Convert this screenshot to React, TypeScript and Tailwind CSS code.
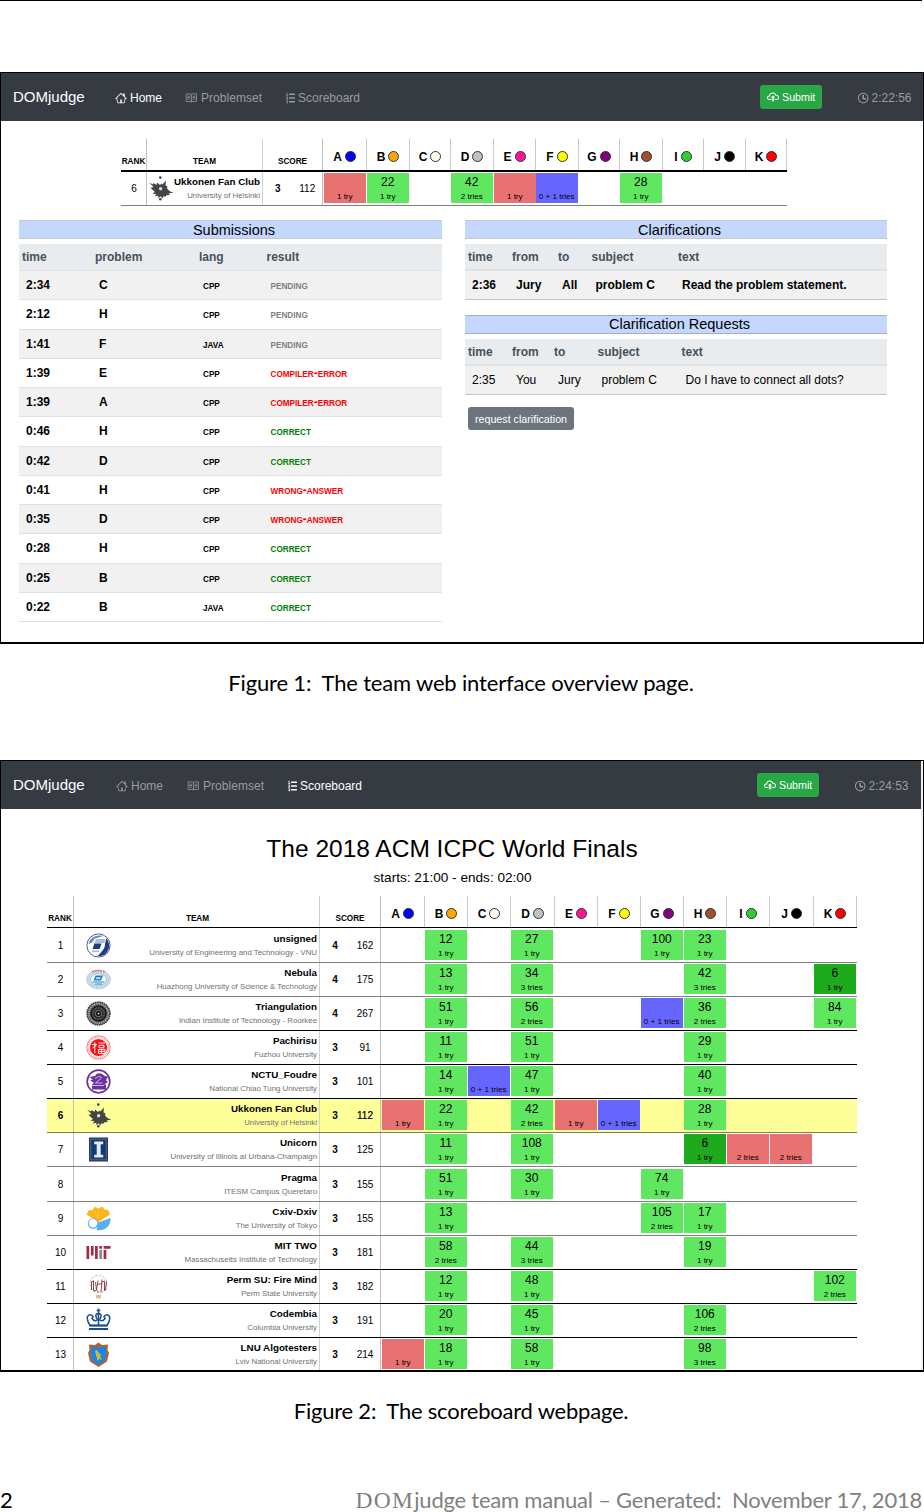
import clsx from 'clsx';
import type { ReactNode } from 'react';

const problems = [
  { label: 'A', color: 'bg-[#0000ff]' },
  { label: 'B', color: 'bg-[#ffa500]' },
  { label: 'C', color: 'bg-[#fffff0]' },
  { label: 'D', color: 'bg-[#c0c0c0]' },
  { label: 'E', color: 'bg-[#ff1493]' },
  { label: 'F', color: 'bg-[#ffff00]' },
  { label: 'G', color: 'bg-[#800080]' },
  { label: 'H', color: 'bg-[#a0522d]' },
  { label: 'I', color: 'bg-[#32cd32]' },
  { label: 'J', color: 'bg-black' },
  { label: 'K', color: 'bg-[#ff0000]' },
];

type Kind = 'solved' | 'first' | 'wrong' | 'pending';
type Result = [problem: string, kind: Kind, time: string, tries: string];

interface Team {
  rank: number;
  name: string;
  school: string;
  solved: number;
  total: number;
  logo: string;
  line: string;
  results: Result[];
}

const cellColors: Record<Kind, string> = {
  solved: 'bg-[#60e760]',
  first: 'bg-[#1daa1d]',
  wrong: 'bg-[#e87272]',
  pending: 'bg-[#6666ff]',
};

const gray = 'h-[34px] border-[#808080]';
const grayTall = 'h-[35px] border-[#808080]';
const black = 'h-[34px] border-black';

const teams: Team[] = [
  { rank: 1, name: 'unsigned', school: 'University of Engineering and Technology - VNU', solved: 4, total: 162, logo: 'vnu', line: grayTall, results: [['B', 'solved', '12', '1 try'], ['D', 'solved', '27', '1 try'], ['G', 'solved', '100', '1 try'], ['H', 'solved', '23', '1 try']] },
  { rank: 2, name: 'Nebula', school: 'Huazhong University of Science & Technology', solved: 4, total: 175, logo: 'hust', line: gray, results: [['B', 'solved', '13', '1 try'], ['D', 'solved', '34', '3 tries'], ['H', 'solved', '42', '3 tries'], ['K', 'first', '6', '1 try']] },
  { rank: 3, name: 'Triangulation', school: 'Indian Institute of Technology - Roorkee', solved: 4, total: 267, logo: 'iit', line: black, results: [['B', 'solved', '51', '1 try'], ['D', 'solved', '56', '2 tries'], ['G', 'pending', '', '0 + 1 tries'], ['H', 'solved', '36', '2 tries'], ['K', 'solved', '84', '1 try']] },
  { rank: 4, name: 'Pachirisu', school: 'Fuzhou University', solved: 3, total: 91, logo: 'fuzhou', line: black, results: [['B', 'solved', '11', '1 try'], ['D', 'solved', '51', '1 try'], ['H', 'solved', '29', '1 try']] },
  { rank: 5, name: 'NCTU_Foudre', school: 'National Chiao Tung University', solved: 3, total: 101, logo: 'nctu', line: black, results: [['B', 'solved', '14', '1 try'], ['C', 'pending', '', '0 + 1 tries'], ['D', 'solved', '47', '1 try'], ['H', 'solved', '40', '1 try']] },
  { rank: 6, name: 'Ukkonen Fan Club', school: 'University of Helsinki', solved: 3, total: 112, logo: 'helsinki', line: 'h-[34px] border-[#80804d]', results: [['A', 'wrong', '', '1 try'], ['B', 'solved', '22', '1 try'], ['D', 'solved', '42', '2 tries'], ['E', 'wrong', '', '1 try'], ['F', 'pending', '', '0 + 1 tries'], ['H', 'solved', '28', '1 try']] },
  { rank: 7, name: 'Unicorn', school: 'University of Illinois at Urbana-Champaign', solved: 3, total: 125, logo: 'illinois', line: gray, results: [['B', 'solved', '11', '1 try'], ['D', 'solved', '108', '1 try'], ['H', 'first', '6', '1 try'], ['I', 'wrong', '', '2 tries'], ['J', 'wrong', '', '2 tries']] },
  { rank: 8, name: 'Pragma', school: 'ITESM Campus Queretaro', solved: 3, total: 155, logo: '', line: grayTall, results: [['B', 'solved', '51', '1 try'], ['D', 'solved', '30', '1 try'], ['G', 'solved', '74', '1 try']] },
  { rank: 9, name: 'Cxiv-Dxiv', school: 'The University of Tokyo', solved: 3, total: 155, logo: 'tokyo', line: gray, results: [['B', 'solved', '13', '1 try'], ['G', 'solved', '105', '2 tries'], ['H', 'solved', '17', '1 try']] },
  { rank: 10, name: 'MIT TWO', school: 'Massachusetts Institute of Technology', solved: 3, total: 181, logo: 'mit', line: black, results: [['B', 'solved', '58', '2 tries'], ['D', 'solved', '44', '3 tries'], ['H', 'solved', '19', '1 try']] },
  { rank: 11, name: 'Perm SU: Fire Mind', school: 'Perm State University', solved: 3, total: 182, logo: 'perm', line: black, results: [['B', 'solved', '12', '1 try'], ['D', 'solved', '48', '1 try'], ['K', 'solved', '102', '2 tries']] },
  { rank: 12, name: 'Codembia', school: 'Columbia University', solved: 3, total: 191, logo: 'columbia', line: black, results: [['B', 'solved', '20', '1 try'], ['D', 'solved', '45', '1 try'], ['H', 'solved', '106', '2 tries']] },
  { rank: 13, name: 'LNU Algotesters', school: 'Lviv National University', solved: 3, total: 214, logo: 'lviv', line: black, results: [['A', 'wrong', '', '1 try'], ['B', 'solved', '18', '1 try'], ['D', 'solved', '58', '1 try'], ['H', 'solved', '98', '3 tries']] },
];

const submissions = [
  ['2:34', 'C', 'CPP', 'PENDING'],
  ['2:12', 'H', 'CPP', 'PENDING'],
  ['1:41', 'F', 'JAVA', 'PENDING'],
  ['1:39', 'E', 'CPP', 'COMPILER-ERROR'],
  ['1:39', 'A', 'CPP', 'COMPILER-ERROR'],
  ['0:46', 'H', 'CPP', 'CORRECT'],
  ['0:42', 'D', 'CPP', 'CORRECT'],
  ['0:41', 'H', 'CPP', 'WRONG-ANSWER'],
  ['0:35', 'D', 'CPP', 'WRONG-ANSWER'],
  ['0:28', 'H', 'CPP', 'CORRECT'],
  ['0:25', 'B', 'CPP', 'CORRECT'],
  ['0:22', 'B', 'JAVA', 'CORRECT'],
];

const resultColors: Record<string, string> = {
  PENDING: 'text-[#808080]',
  CORRECT: 'text-[#008000]',
  'COMPILER-ERROR': 'text-[#ff0000]',
  'WRONG-ANSWER': 'text-[#ff0000]',
};

const icons = {
  home: 'M16 9l-3-3V2h-2v2L8 1 0 9h2l1 5c0 .55.45 1 1 1h8c.55 0 1-.45 1-1l1-5h2zm-4 5H9v-4H7v4H4L2.81 7.69 8 2.5l5.19 5.19L12 14z',
  book: 'M3 5h4v1H3V5zm0 3h4V7H3v1zm0 2h4V9H3v1zm11-5h-4v1h4V5zm0 2h-4v1h4V7zm0 2h-4v1h4V9zm2-6v9c0 .55-.45 1-1 1H9.5l-1 1-1-1H2c-.55 0-1-.45-1-1V3c0-.55.45-1 1-1h5.5l1 1 1-1H15c.55 0 1 .45 1 1zm-8 .5L7.5 3H2v9h6V3.5zm7-.5H9.5l-.5.5V12h6V3z',
  list: 'M12 13c0 .59 0 1-.59 1H4.59C4 14 4 13.59 4 13c0-.59 0-1 .59-1h6.81c.59 0 .59.41.59 1H12zM4.59 4h6.81c.59 0 .59-.41.59-1 0-.59 0-1-.59-1H4.59C4 2 4 2.41 4 3c0 .59 0 1 .59 1zm6.81 3H4.59C4 7 4 7.41 4 8c0 .59 0 1 .59 1h6.81c.59 0 .59-.41.59-1 0-.59 0-1-.59-1zM2 1h-.72c-.3.19-.58.25-1.03.34V2H1v2.14H.16V5H3v-.86H2V1zm.25 8.13c-.17 0-.45.03-.66.06.53-.56 1.14-1.25 1.14-1.89C2.72 6.52 2.17 6 1.38 6c-.59 0-.97.2-1.38.64l.58.58c.19-.19.38-.38.64-.38.28 0 .48.16.48.52 0 .53-.77 1.2-1.7 2.06V10h3l-.09-.88h-.66l.01.01zm-.08 3.78v-.03c.44-.19.64-.47.64-.86 0-.7-.56-1.11-1.44-1.11-.48 0-.89.19-1.28.52l.55.64c.25-.2.44-.31.69-.31.27 0 .42.13.42.36 0 .27-.2.44-.86.44v.75c.83 0 .98.17.98.47 0 .25-.23.38-.58.38-.28 0-.56-.14-.81-.38l-.48.66c.3.36.77.56 1.41.56.83 0 1.53-.41 1.53-1.16 0-.5-.31-.81-.77-.94v.01z',
  upload: 'M7 9H5l3-3 3 3H9v5H7V9zm5-4c0-.44-.91-3-4.5-3C5.08 2 3 3.92 3 6 1.02 6 0 7.52 0 9c0 1.53 1 3 3 3h3v-1.3H3c-1.62 0-1.7-1.42-1.7-1.7 0-.17.05-1.7 1.7-1.7h1.3V6c0-1.39 1.56-2.7 3.2-2.7 2.55 0 3.13 1.55 3.2 1.8v1.2H12c.81 0 2.7.22 2.7 2.2 0 2.09-2.25 2.2-2.7 2.2h-2V12h2c2.08 0 4-1.16 4-3.5C16 6.06 14.08 5 12 5z',
  clock: 'M8 8h3v2H7c-.55 0-1-.45-1-1V4h2v4zM7 2.3c3.14 0 5.7 2.56 5.7 5.7s-2.56 5.7-5.7 5.7A5.71 5.71 0 0 1 1.3 8c0-3.14 2.56-5.7 5.7-5.7zM7 1C3.14 1 0 4.14 0 8s3.14 7 7 7 7-3.14 7-7-3.14-7-7-7z',
};

function Icon({ name, width = 16, className }: { name: keyof typeof icons; width?: number; className: string }) {
  return (
    <svg viewBox={`0 0 ${width} 16`} className={clsx('shrink-0 fill-current', className)}>
      <path d={icons[name]} />
    </svg>
  );
}

function Logo({ name }: { name: string }) {
  return (
    <svg viewBox="0 0 25 25" className="h-[25px] w-[25px] shrink-0">
      {name === 'vnu' && (
        <>
          <circle cx="12.5" cy="12.5" r="11.6" fill="#fff" stroke="#4463a0" strokeWidth="1" />
          <path d="M20 4.9A10.7 10.7 0 0 1 11.5 23.15L15 19.500l3-4z" fill="#1f3c80" />
          <path d="M2.500 11C4 4 11 1.500 17 3L9.500 5.500 6 9.500z" fill="#6d88bd" />
          <path d="M8.500 5.500h11.500L18 15.500H5z" fill="#fff" />
          <path d="M9.500 7h9.500M9 9h9.500" stroke="#5878b3" strokeWidth="1.100" />
          <path d="M8.500 10.500h7l-1.800 5.500H6.500z" fill="#1f3c80" />
          <path d="M4.500 17.500h10L11 22z" fill="#fff" />
          <path d="M6 18.200h7" stroke="#8297c0" strokeWidth="1" />
        </>
      )}
      {name === 'hust' && (
        <>
          <ellipse cx="12.500" cy="12.500" rx="11.900" ry="9.400" fill="#dde9f2" stroke="#a9c4d8" strokeWidth=".8" />
          <ellipse cx="12.500" cy="12.500" rx="10" ry="7.700" fill="none" stroke="#9fb8ca" strokeWidth="1.600" strokeDasharray="1 1.200" />
          <ellipse cx="12.500" cy="12.500" rx="8" ry="6" fill="#f6fbff" stroke="#7fb0d6" strokeWidth=".8" />
          <path d="M6 4.800Q12.500 2.300 19 4.800" fill="none" stroke="#ef5d55" strokeWidth="1.500" strokeDasharray="1.800 1" />
          <path d="M9.500 8.500h7.500l-2 5H7.800z" fill="#1679c4" />
          <path d="M10.500 10h4.500l-1 2.200H9.500z" fill="#a9d2ee" />
          <path d="M6.500 15h12M9 17h7" stroke="#2784c8" strokeWidth="1.100" />
        </>
      )}
      {name === 'iit' && (
        <>
          <circle cx="12.500" cy="12.500" r="11.600" fill="#686868" stroke="#333" strokeWidth="1.200" strokeDasharray="1.500 .8" />
          <circle cx="12.500" cy="12.500" r="9.800" fill="none" stroke="#c4c4c4" strokeWidth="1.200" strokeDasharray="1 1.300" />
          <circle cx="12.500" cy="12.500" r="7.600" fill="#262626" stroke="#0a0a0a" strokeWidth="1" />
          <circle cx="12.500" cy="12.500" r="5.700" fill="none" stroke="#8a8a8a" strokeWidth="1.200" strokeDasharray=".8 .8" />
          <circle cx="12.500" cy="12.500" r="3.200" fill="#111" stroke="#aaa" strokeWidth=".7" />
          <circle cx="12.500" cy="12.500" r="1" fill="#ccc" />
        </>
      )}
      {name === 'fuzhou' && (
        <>
          <circle cx="12.500" cy="12.500" r="11.700" fill="#fff" stroke="#f66" strokeWidth=".9" />
          <circle cx="12.500" cy="12.500" r="10.100" fill="none" stroke="#f99" strokeWidth="1.500" strokeDasharray="1 .9" />
          <circle cx="12.500" cy="12.500" r="8.600" fill="#f31313" />
          <path d="M6 9.500h5M8.800 7v11M6.500 13l4-3M12.500 8h6.500M13 10.300h5v2.500h-5zM12.500 14.500h6.500v4h-6.500zM15.700 14.500v4M12.500 16.500h6.500" fill="none" stroke="#fff" strokeWidth=".9" />
        </>
      )}
      {name === 'nctu' && (
        <>
          <circle cx="12.500" cy="12.500" r="11.300" fill="#fff" stroke="#6a2fa0" strokeWidth="1.700" />
          <path d="M3 8l6-1 2-2.500h4.500l3 2.500 3.500.500-2 4 2 1.500-4 2.500h2v5H6v-5l2-1.500-4-3 3-.500z" fill="#6a2fa0" />
          <path d="M9 9.500l5-2.500 1.500 2-6 5h7M6 16.500h12" fill="none" stroke="#e6d9f0" strokeWidth=".8" />
        </>
      )}
      {name === 'helsinki' && (
        <>
          <path d="M1 6.500l4 2 .5-1.500 3 2 .5-2.500 3 2.500 1.500-1.500 1 1 3.500-4-.500 5 2 1-.500 2 2.500 2.500 4 2-5 .300 1.500 1.700-3.500.200-1.500 2-1-1.500-2 3-1-2.500-3 2 .500-2.500-4 .800 2-2.300-4-.700 2.500-1.500L2.500 12l3-1z" fill="#444" />
          <circle cx="12.600" cy="12.800" r="1.700" fill="#ddd" />
          <circle cx="12.300" cy="1.600" r="1.300" fill="#444" />
          <circle cx="12.300" cy="23.300" r="1.300" fill="#444" />
        </>
      )}
      {name === 'illinois' && (
        <>
          <rect x="3" y=".500" width="19" height="24" fill="#163f73" />
          <rect x="4.800" y="2.200" width="15.400" height="20.600" fill="#0f3c78" stroke="#966b61" strokeWidth=".7" />
          <path d="M8.200 4.500h9v2.800h-2.500v10.500h2.500v2.700h-9v-2.700h2.500V7.300H8.200z" fill="#e3ebf3" />
        </>
      )}
      {name === 'tokyo' && (
        <>
          <path d="M12.300 16L.500 8.500l2.500-4.500 3 .5L9 .800l3.500 2L16 .500l3 3.500 3-.200 2 4.700z" fill="#fdb515" />
          <path d="M11.500 12L7.500 4.500M12.500 12V4M13.500 12L17.500 4.500" stroke="#ffd46b" strokeWidth=".4" />
          <path d="M12 16.500l12.500-4.500Q25 19 19.500 22.500 16 25 10.500 24z" fill="#59aef0" />
          <circle cx="7" cy="17.500" r="5.200" fill="#59aef0" />
          <circle cx="7" cy="17.300" r="4.200" fill="#fff" />
        </>
      )}
      {name === 'mit' && (
        <>
          <path d="M.5 6h2.700v13H.5zM4.900 6h2.700v9.500H4.900zM9 6h2.700v13H9zM13.300 6H16v2.700h-2.700zM17.600 6h7v2.700h-7zM17.600 10h2.700v9h-2.700z" fill="#a32a43" />
          <path d="M13.300 10H16v9h-2.700z" fill="#8b8b8c" />
        </>
      )}
      {name === 'perm' && (
        <>
          <circle cx="12.500" cy="10" r="8.500" fill="none" stroke="#e7cdb5" strokeWidth="1.200" strokeDasharray="3 1" />
          <path d="M5.500 8v8M7.500 6.500v10M9.500 8l1 8-3 1M12 6.500l-1.500 9 2 3M12 10h4M16 5.500l-1 13M18.500 8v9M20.500 7l-1 9.500M5 8l3-1M16 8l3-1" fill="none" stroke="#7d3038" strokeWidth=".9" />
          <path d="M9.500 21h6l-1 3.500h-4z" fill="#dcbb93" />
        </>
      )}
      {name === 'columbia' && (
        <>
          <path d="M4 17.500Q.500 12 1.500 8.500 4 5 7 8.500L6 10.500Q8.500 14 11.300 12L10 8.500Q9.500 5.500 12.500 5.500T15 8.500L13.700 12Q16.500 14 19 10.500l-1-2Q21 5 23.500 8.500 24.500 12 21 17.500z" fill="none" stroke="#174f8c" strokeWidth="1.500" />
          <path d="M12.500 .5v17M10.700 2.500h3.600" stroke="#174f8c" strokeWidth="1.500" />
          <path d="M3.500 17.500h18M3 21h19" stroke="#174f8c" strokeWidth="2" />
        </>
      )}
      {name === 'lviv' && (
        <>
          <path d="M3 2.500l6 .5L12.500.500 16 3l6-.5-.5 5.500 1.500 3-2 8.500-8.500 5.500L4 19.500 2 11l1.500-3z" fill="#b5602d" />
          <path d="M5 5h15v9.500Q18.500 20 12.500 22.500 6.500 20 5 14.500z" fill="#1688ea" />
          <path d="M9 9l2-1 2 3 2 2-1 2 2 3-3-1-2 2v-3l-1-3z" fill="#d8b62f" />
        </>
      )}
    </svg>
  );
}

interface NavbarProps {
  active: 'home' | 'scoreboard';
  clock: string;
}

function Navbar({ active, clock }: NavbarProps) {
  const home = active === 'home';
  return (
    <nav
      className={clsx(
        'flex h-12 items-center bg-[#363a41] pt-px text-[12px] text-[#999ca0]',
        home ? 'w-[922px]' : 'w-[920px]',
      )}
    >
      <div className={clsx('pl-[12px] text-[15px] text-white', home ? 'w-[114px]' : 'w-[115px]')}>DOMjudge</div>
      <div className={clsx('flex items-center gap-[3px]', home ? 'w-[70px] text-white' : 'w-[71px]')}>
        <Icon name="home" className="h-3 w-3" />
        Home
      </div>
      <div className="flex w-[101px] items-center gap-[4px] tracking-[0.05px]">
        <Icon name="book" className="h-3 w-3" />
        Problemset
      </div>
      <div className={clsx('flex items-center gap-[3px]', !home && 'text-white')}>
        <Icon name="list" width={12} className="h-3 w-[9px]" />
        Scoreboard
      </div>
      <div className="mb-px ml-auto flex h-6 w-[62px] items-center gap-[3px] rounded-[3px] bg-[#28a745] pl-[7px] text-[10.700px] text-white">
        <Icon name="upload" className="h-3 w-3" />
        Submit
      </div>
      <div className={clsx('ml-[36px] flex items-center gap-[3px]', home ? 'w-[65px]' : 'w-[66px]')}>
        <Icon name="clock" width={14} className="h-3 w-[10.500px]" />
        {clock}
      </div>
    </nav>
  );
}

function ProblemHeader({ label, color }: { label: string; color: string }) {
  return (
    <div className="flex justify-center gap-[3px] border-r border-[#c9c9c9] pt-[11px] text-[12px] leading-[15px] font-bold">
      {label}
      <span className={clsx('mt-[1px] h-[11px] w-[11px] rounded-full border border-[#333]', color)} />
    </div>
  );
}

function Cell({ result }: { result?: Result }) {
  if (!result) return <div />;
  const [problem, kind, time, tries] = result;
  return (
    <div className={clsx('flex justify-start pt-[1px]', problem === 'A' && 'pl-[1px]')}>
      <div className={clsx('h-[30px] w-[41.500px] text-center', cellColors[kind])}>
        <div className="h-[19px] text-[12px] leading-[18px]">{time}</div>
        <div className="text-[8.100px] leading-[10px] whitespace-nowrap">{tries}</div>
      </div>
    </div>
  );
}

function Scoreboard({ rows, compact = false }: { rows: Team[]; compact?: boolean }) {
  const columns = compact
    ? 'grid grid-cols-[26px_116px_60px_44px_43px_41px_43px_42px_43px_41px_43px_41px_42px_41px]'
    : 'grid grid-cols-[27px_246px_61px_44px_43px_43px_44px_43px_43px_43px_43px_43px_44px_43px]';
  const headCell = 'border-r pt-[18px] text-center text-[8.200px] leading-[10px] font-bold';
  return (
    <div className={compact ? 'w-[666px]' : 'w-[810px]'}>
      <div className={clsx(columns, 'border-black', compact ? 'h-[33px] border-b-2' : 'h-8 border-b')}>
        <div className={clsx(headCell, 'border-[#c0c0c0]')}>RANK</div>
        <div className={clsx(headCell, 'border-[#d0d0d0]', !compact && 'pl-[2px]')}>TEAM</div>
        <div className={clsx(headCell, 'border-[#c0c0c0]')}>SCORE</div>
        {problems.map((p) => (
          <ProblemHeader key={p.label} {...p} />
        ))}
      </div>
      {rows.map((team) => (
        <div
          key={team.rank}
          className={clsx(
            columns,
            'items-end border-b',
            compact ? 'h-[34px] border-[#808080]' : team.line,
            !compact && team.rank === 6 && 'bg-[#ffff99]',
          )}
        >
          <div
            className={clsx(
              'flex h-full items-end justify-center border-r border-[#c0c0c0] pb-[11px] pl-px text-[10px] leading-[11px]',
              !compact && team.rank === 6 && 'font-bold',
            )}
          >
            {team.rank}
          </div>
          <div className="flex h-full items-end border-r border-[#d0d0d0]">
            <div className={clsx('flex h-[33px] pt-[4px]', compact ? 'pl-[1px]' : 'pl-[12px]')}>
              {team.logo && <Logo name={team.logo} />}
            </div>
            <div className="h-[33px] flex-1 pt-[3px] pr-[2px] text-right whitespace-nowrap">
              <div className="text-[9.800px] leading-[13px] font-bold">{team.name}</div>
              <div className="text-[7.850px] leading-[16px] text-[#707070]">{team.school}</div>
            </div>
          </div>
          <div className="flex h-full items-end border-r border-[#c0c0c0] pb-[11px] text-center text-[10px] leading-[11px]">
            <span className="w-[30px] font-bold">{team.solved}</span>
            <span className={clsx('w-[30px]', !compact && team.rank === 6 && '[-webkit-text-stroke:0.2px]')}>{team.total}</span>
          </div>
          {problems.map((p) => (
            <div key={p.label} className="h-[33px]">
              <Cell result={team.results.find((r) => r[0] === p.label)} />
            </div>
          ))}
        </div>
      ))}
    </div>
  );
}

function Title({ children, className }: { children: ReactNode; className: string }) {
  return (
    <h2 className={clsx('border-y bg-[#c4d7ff] pl-[7px] text-center text-[14.500px]', className)}>{children}</h2>
  );
}

interface ClarificationProps {
  title: string;
  titleClass: string;
  columns: string;
  row: string[];
  bold?: boolean;
}

function Clarification({ title, titleClass, columns, row, bold }: ClarificationProps) {
  return (
    <div>
      <Title className={titleClass}>{title}</Title>
      <div className={clsx('mt-[5px] h-[27px] border-b-2 border-[#dee2e6] bg-[#e8ecef] pl-[3px] leading-[26px] font-bold text-[#495057]', columns)}>
        {['time', 'from', 'to', 'subject', 'text'].map((h) => (
          <span key={h}>{h}</span>
        ))}
      </div>
      <div className={clsx('h-[29px] border-b border-[#c4c4c4] bg-[#f1f1f1] pl-[7px] leading-[28px] whitespace-nowrap', columns, bold && 'font-bold')}>
        {row.map((value) => (
          <span key={value}>{value}</span>
        ))}
      </div>
    </div>
  );
}

function Submissions() {
  const columns = 'grid grid-cols-[73px_104px_67.500px_1fr]';
  return (
    <div className="w-[423px]">
      <Title className="h-[19px] border-[#c8c8c8] leading-[18px]">Submissions</Title>
      <div className={clsx('mt-[5px] h-[27px] border-b border-[#dee2e6] bg-[#e8ecef] pl-[3px] leading-[26px] font-bold text-[#495057]', columns)}>
        <span>time</span>
        <span>problem</span>
        <span>lang</span>
        <span>result</span>
      </div>
      {submissions.map(([time, problem, lang, result], i) => {
        const [first, second] = result.split('-');
        return (
          <div
            key={time + problem}
            className={clsx(
              'h-[29.250px] border-b border-[#dee2e6] pl-[7px] leading-[28px] font-bold',
              columns,
              i % 2 === 0 && 'bg-[#f1f1f1]',
            )}
          >
            <span>{time}</span>
            <span>{problem}</span>
            <span className="pt-[2px] text-[8.200px]">{lang}</span>
            <span className={clsx('pt-[2px] text-[8.200px]', resultColors[result])}>
              {first}
              {second && <span className="text-[12px] leading-none">-</span>}
              {second}
            </span>
          </div>
        );
      })}
    </div>
  );
}

function Overview() {
  return (
    <div className="mt-[71px] h-[572px] overflow-hidden border border-b-2 border-black">
      <Navbar active="home" clock="2:22:56" />
      <div className="pt-[18px] pl-[120px]">
        <Scoreboard rows={teams.filter((t) => t.rank === 6)} compact />
      </div>
      <div className="mt-[14px] flex gap-[23px] pl-[18px] text-[12px]">
        <Submissions />
        <div className="w-[422px]">
          <Clarification
            title="Clarifications"
            titleClass="h-[19px] border-[#c8c8c8] leading-[18px]"
            columns="grid grid-cols-[44px_46px_33.500px_86.500px_1fr]"
            row={['2:36', 'Jury', 'All', 'problem C', 'Read the problem statement.']}
            bold
          />
          <div className="h-[15px]" />
          <Clarification
            title="Clarification Requests"
            titleClass="h-[19px] border-[#a5adc0] leading-[17px]"
            columns="grid grid-cols-[44px_42px_43.500px_84px_1fr]"
            row={['2:35', 'You', 'Jury', 'problem C', 'Do I have to connect all dots?']}
          />
          <button className="mt-[12px] ml-[3px] block h-[23px] w-[106px] rounded-[3px] bg-[#6c757d] text-[10.700px] leading-[22px] text-white">
            request clarification
          </button>
        </div>
      </div>
    </div>
  );
}

function ScoreboardPage() {
  return (
    <div className="flex h-[612px] justify-between overflow-hidden border border-b-2 border-black">
      <div className="w-[920px]">
        <Navbar active="scoreboard" clock="2:24:53" />
        <h1 className="mt-[25px] h-[30px] pr-[18px] text-center text-[24.500px] leading-[30px]">
          The 2018 ACM ICPC World Finals
        </h1>
        <p className="mt-[5px] pr-[17px] text-center text-[13.600px] leading-[18px]">starts: 21:00 - ends: 02:00</p>
        <div className="pt-[9px] pl-[46px]">
          <Scoreboard rows={teams} />
        </div>
      </div>
      <div className="w-[2px] bg-[#f1f1f1]" />
    </div>
  );
}

export default function App() {
  return (
    <div className="h-[1512px] w-[924px] overflow-hidden bg-white font-['Liberation_Sans',Arial,sans-serif] text-black">
      <div className="h-px w-[922px] bg-black" />
      <Overview />
      <p className="mt-[25px] h-[28px] pr-[2px] text-center font-['Lato',sans-serif] text-[22px] leading-[28px] tracking-[-0.170px] whitespace-pre">
        {'Figure 1:  The team web interface overview page.'}
      </p>
      <div className="h-[63px]" />
      <ScoreboardPage />
      <p className="mt-[25px] h-[28px] pr-[2px] text-center font-['Lato',sans-serif] text-[22px] leading-[28px] tracking-[-0.220px] whitespace-pre">
        {'Figure 2:  The scoreboard webpage.'}
      </p>
      <footer className="mt-[61px] flex h-[26px] justify-between pr-[2px] font-['Lato',sans-serif] text-[22px] leading-[28px] whitespace-pre">
        <span>2</span>
        <span className="tracking-[-0.220px] text-[#808080]">
          <span className="font-['Liberation_Serif',serif] text-[23.500px] leading-none tracking-[1.300px]">DOM</span>
          {'judge team manual – Generated:  November 17, 2018'}
        </span>
      </footer>
    </div>
  );
}
